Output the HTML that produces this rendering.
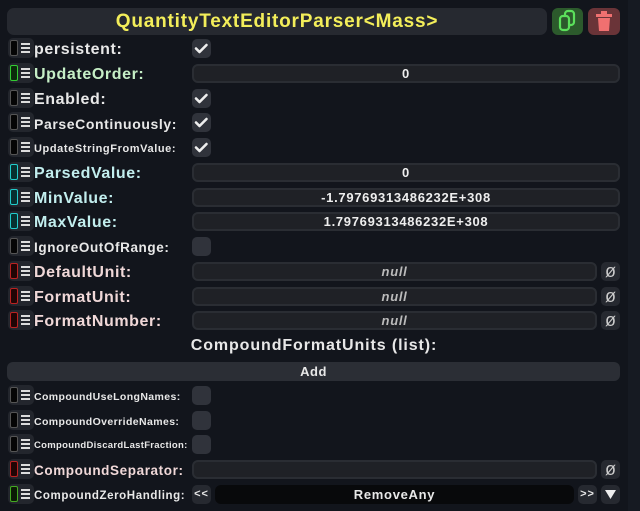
<!DOCTYPE html>
<html><head><meta charset="utf-8"><style>
*{margin:0;padding:0;box-sizing:border-box}
body{width:640px;height:511px;background:#12151c;font-family:"Liberation Sans",sans-serif;font-weight:bold;position:relative;overflow:hidden;color:#e8e8e8}
.strip{position:absolute;left:628px;top:0;width:12px;height:511px;background:#161a22}
.a{position:absolute}
.ic{position:absolute;left:8px;width:26px;height:20px;background:#23262d;border-radius:5px}
.ic i{position:absolute;left:2px;top:2px;width:8px;height:16px;background:#050505;border:1px solid #555;border-radius:2px}
.ic b{position:absolute;left:13px;top:5px;width:9px;height:2px;background:#ddd;box-shadow:0 4px 0 #ddd,0 8px 0 #ddd}
.lb{position:absolute;left:34px;white-space:nowrap;line-height:20px;margin-top:2px;letter-spacing:0.6px}
.cb{position:absolute;left:192px;width:19px;height:19px;background:#30333b;border-radius:5px}
.fd{position:absolute;left:192px;width:428px;height:19px;background:#1f2126;border:2px solid #2a2d33;border-radius:6px;text-align:center;font-size:13px;line-height:16px;color:#eee;letter-spacing:0.7px}
.nl{width:405px;font-style:italic;color:#bbb}
.nb{position:absolute;left:601px;width:19px;height:19px;background:#262930;border-radius:5px;color:#ccc;font-size:18px;text-align:center;line-height:19px;font-weight:normal}
</style></head><body>
<div class="strip"></div>
<div class="a" style="left:7px;top:8px;width:540px;height:27px;background:#262930;border-radius:7px;text-align:center;color:#f3ee5a;font-size:19px;line-height:27px;letter-spacing:0.8px">QuantityTextEditorParser&lt;Mass&gt;</div>
<div class="a" style="left:552px;top:8px;width:31px;height:27px;background:#2c5a2c;border-radius:6px">
<svg width="31" height="27" viewBox="0 0 31 27"><rect x="13" y="3" width="9" height="14" rx="3" fill="none" stroke="#5be05b" stroke-width="2.2"/><rect x="8" y="8" width="9" height="14" rx="3" fill="#2c5a2c" stroke="#5be05b" stroke-width="2.2"/></svg></div>
<div class="a" style="left:588px;top:8px;width:32px;height:27px;background:#6a3438;border-radius:6px">
<svg width="32" height="27" viewBox="0 0 32 27"><rect x="13" y="3" width="6" height="3" fill="#f07070"/><rect x="8" y="6" width="16" height="3" fill="#f07070"/><path d="M10 10H22L21 23H11Z" fill="#f07070"/></svg></div>

<div class="ic" style="top:38px"><i></i><b></b></div><div class="lb" style="top:38px;font-size:16px">persistent:</div><div class="cb" style="top:39px"></div>
<div class="ic" style="top:63px"><i style="border-color:#3c3;background:#0b2a0b"></i><b></b></div><div class="lb" style="top:63px;font-size:16px;color:#c6efc6">UpdateOrder:</div><div class="fd" style="top:64px">0</div>
<div class="ic" style="top:88px"><i></i><b></b></div><div class="lb" style="top:88px;font-size:16px">Enabled:</div><div class="cb" style="top:89px"></div>
<div class="ic" style="top:112px"><i></i><b></b></div><div class="lb" style="top:112px;font-size:14px">ParseContinuously:</div><div class="cb" style="top:113px"></div>
<div class="ic" style="top:137px"><i></i><b></b></div><div class="lb" style="top:137px;font-size:11px">UpdateStringFromValue:</div><div class="cb" style="top:138px"></div>
<div class="ic" style="top:162px"><i style="border-color:#2cc;background:#073030"></i><b></b></div><div class="lb" style="top:162px;font-size:16px;color:#c2eeee">ParsedValue:</div><div class="fd" style="top:163px">0</div>
<div class="ic" style="top:187px"><i style="border-color:#2cc;background:#073030"></i><b></b></div><div class="lb" style="top:187px;font-size:16px;color:#c2eeee">MinValue:</div><div class="fd" style="top:188px">-1.79769313486232E+308</div>
<div class="ic" style="top:211px"><i style="border-color:#2cc;background:#073030"></i><b></b></div><div class="lb" style="top:211px;font-size:16px;color:#c2eeee">MaxValue:</div><div class="fd" style="top:212px">1.79769313486232E+308</div>
<div class="ic" style="top:236px"><i></i><b></b></div><div class="lb" style="top:236px;font-size:13.5px">IgnoreOutOfRange:</div><div class="cb" style="top:237px"></div>
<div class="ic" style="top:261px"><i style="border-color:#b22;background:#200505"></i><b></b></div><div class="lb" style="top:261px;font-size:16px;color:#f0d8d8">DefaultUnit:</div><div class="fd nl" style="top:262px">null</div><div class="nb" style="top:262px">ø</div>
<div class="ic" style="top:286px"><i style="border-color:#b22;background:#200505"></i><b></b></div><div class="lb" style="top:286px;font-size:16px;color:#f0d8d8">FormatUnit:</div><div class="fd nl" style="top:287px">null</div><div class="nb" style="top:287px">ø</div>
<div class="ic" style="top:310px"><i style="border-color:#b22;background:#200505"></i><b></b></div><div class="lb" style="top:310px;font-size:16px;color:#f0d8d8">FormatNumber:</div><div class="fd nl" style="top:311px">null</div><div class="nb" style="top:311px">ø</div>

<div class="a" style="left:0;width:628px;top:336px;text-align:center;font-size:16px;line-height:20px;letter-spacing:0.9px">CompoundFormatUnits (list):</div>
<div class="a" style="left:7px;top:362px;width:613px;height:19px;background:#2b2e35;border-radius:6px;text-align:center;font-size:13px;line-height:19px;letter-spacing:0.5px">Add</div>

<div class="ic" style="top:385px"><i></i><b></b></div><div class="lb" style="top:385px;font-size:10.5px;letter-spacing:0.4px">CompoundUseLongNames:</div><div class="cb" style="top:386px"></div>
<div class="ic" style="top:410px"><i></i><b></b></div><div class="lb" style="top:410px;font-size:10.5px;letter-spacing:0.4px">CompoundOverrideNames:</div><div class="cb" style="top:411px"></div>
<div class="ic" style="top:434px"><i></i><b></b></div><div class="lb" style="top:434px;font-size:9.5px;letter-spacing:0.3px">CompoundDiscardLastFraction:</div><div class="cb" style="top:435px"></div>
<div class="ic" style="top:459px"><i style="border-color:#b22;background:#200505"></i><b></b></div><div class="lb" style="top:459px;font-size:13.5px;color:#f0d8d8">CompoundSeparator:</div><div class="fd nl" style="top:460px"></div><div class="nb" style="top:460px">ø</div>
<div class="ic" style="top:484px"><i style="border-color:#4a2;background:#0b1a05"></i><b></b></div><div class="lb" style="top:484px;font-size:11.5px">CompoundZeroHandling:</div>
<div class="a" style="left:192px;top:485px;width:19px;height:19px;background:#262930;border-radius:5px;font-size:11px;text-align:center;line-height:19px;letter-spacing:1px">&lt;&lt;</div>
<div class="a" style="left:215px;top:485px;width:359px;height:19px;background:#08090b;border-radius:6px;font-size:13px;text-align:center;line-height:19px;letter-spacing:0.7px">RemoveAny</div>
<div class="a" style="left:578px;top:485px;width:19px;height:19px;background:#262930;border-radius:5px;font-size:11px;text-align:center;line-height:19px;letter-spacing:1px">&gt;&gt;</div>
<div class="a" style="left:601px;top:485px;width:19px;height:19px;background:#262930;border-radius:5px"><svg width="19" height="19"><path d="M4 5H15L9.5 14Z" fill="#eee"/></svg></div>

<svg class="a" style="left:0;top:0" width="640" height="511">
<g fill="none" stroke="#eee" stroke-width="2.6" stroke-linecap="round" stroke-linejoin="round">
<path d="M196 48.5l3.5 3.5 7-7"/><path d="M196 98.5l3.5 3.5 7-7"/><path d="M196 122.5l3.5 3.5 7-7"/><path d="M196 147.5l3.5 3.5 7-7"/>
</g></svg>
</body></html>
